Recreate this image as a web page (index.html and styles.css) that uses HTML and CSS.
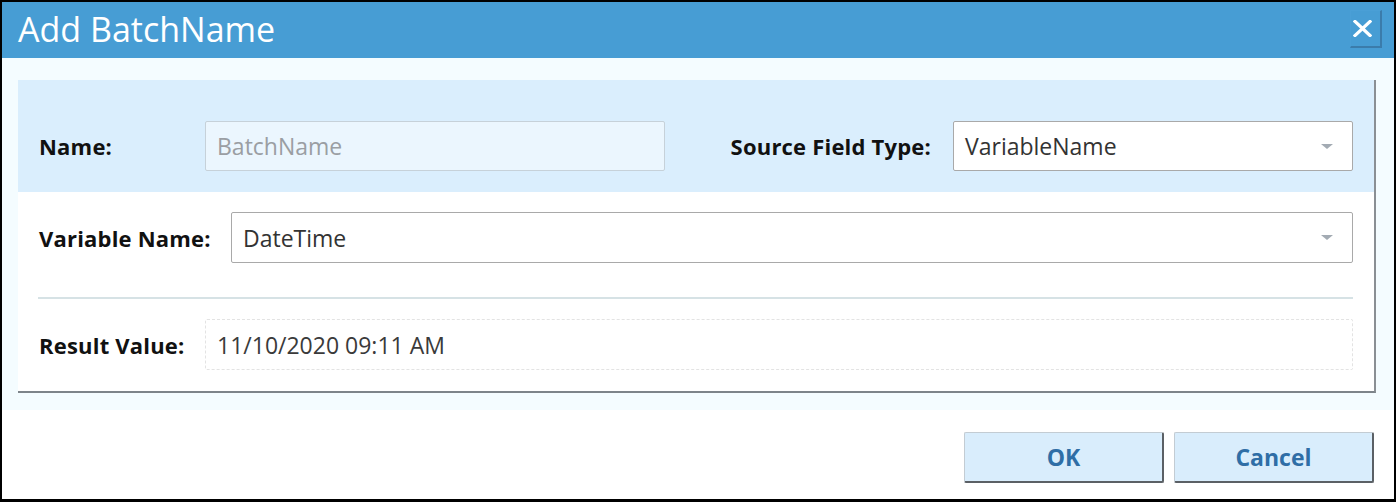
FILE: index.html
```html
<!DOCTYPE html>
<html>
<head>
<meta charset="utf-8">
<title>Add BatchName</title>
<link rel="stylesheet" href="styles.css">
</head>
<body>
<div class="window">
  <header class="titlebar">
    <h1 class="title">Add BatchName</h1>
    <button class="close" aria-label="Close">
      <svg width="19" height="17" viewBox="0 0 19 17"><path d="M2 1.5 L17 15.5 M17 1.5 L2 15.5" stroke="#ffffff" stroke-width="3.2" stroke-linecap="square"/></svg>
    </button>
  </header>
  <main class="content">
    <section class="panel">
      <div class="panel-top">
        <div class="row">
          <span class="label label-name">Name:</span>
          <div class="field field-readonly">BatchName</div>
          <span class="label label-source">Source Field Type:</span>
          <div class="field select select-source"><span>VariableName</span><span class="arrow"></span></div>
        </div>
      </div>
      <div class="panel-bottom">
        <div class="row">
          <span class="label label-variable">Variable Name:</span>
          <div class="field select select-variable"><span>DateTime</span><span class="arrow"></span></div>
        </div>
        <div class="sep"></div>
        <div class="row">
          <span class="label label-result">Result Value:</span>
          <div class="field field-result">11/10/2020 09:11 AM</div>
        </div>
      </div>
    </section>
    <footer class="buttons">
      <button class="btn">OK</button>
      <button class="btn">Cancel</button>
    </footer>
  </main>
</div>
</body>
</html>
```
FILE: styles.css
```css
* { box-sizing: border-box; }
html, body { margin: 0; padding: 0; background: #ffffff; }
body { font-family: "Open Sans", "Noto Sans", "Liberation Sans", sans-serif; }

.window {
  width: 1396px;
  height: 502px;
  border: 2px solid #000000;
  border-bottom-width: 3px;
  background: #ffffff;
  display: flex;
  flex-direction: column;
}

.titlebar {
  height: 56px;
  background: #479dd4;
  display: flex;
  justify-content: space-between;
  align-items: flex-start;
  padding: 0 12px 0 16px;
  flex: none;
}
.title {
  margin: 0;
  font-weight: 400;
  font-size: 34px;
  line-height: 54px;
  color: #ffffff;
  letter-spacing: 0;
}
.close {
  margin-top: 8px;
  width: 32px;
  height: 38px;
  padding: 0 6px 0 0;
  background: #479dd4;
  border: 1px solid #4a9fd6;
  border-right: 2px solid #3b7cab;
  border-bottom: 2px solid #3b7cab;
  display: flex;
  align-items: center;
  justify-content: center;
}
.close svg { display: block; }

.content {
  flex: 1;
  background: linear-gradient(#f4fcff 0, #f4fcff 352px, #ffffff 352px);
  padding: 22px 18px 0 16px;
  display: flex;
  flex-direction: column;
}

.panel {
  background: #ffffff;
  border-right: 2px solid #8a8f94;
  border-bottom: 2px solid #7d848a;
}
.panel-top {
  background: #daeefd;
  height: 112px;
  padding: 41px 21px 0 21px;
}
.panel-bottom {
  padding: 20px 21px 21px 20px;
}

.row {
  display: flex;
  align-items: center;
}

.label {
  font-weight: 700;
  font-size: 22px;
  color: #111111;
  letter-spacing: 0.2px;
  flex: none;
}
.label-name { width: 166px; }
.label-source { margin-left: auto; margin-right: 22px; }
.label-variable { width: 193px; padding-left: 1px; }
.label-result { width: 167px; padding-left: 1px; }

.field {
  height: 50px;
  display: flex;
  align-items: center;
  padding: 0 11px;
  font-size: 23px;
  color: #333333;
  border-radius: 2px;
}
.field-readonly {
  width: 460px;
  background: #ebf6fe;
  border: 1px solid #c6d1d9;
  color: #9a9ea3;
}
.select {
  background: #ffffff;
  border: 1px solid #a9a9a9;
  justify-content: space-between;
  padding-right: 19px;
}
.select-source { width: 400px; }
.select-variable { flex: 1; height: 51px; }
.arrow {
  width: 0;
  height: 0;
  border-left: 6px solid transparent;
  border-right: 6px solid transparent;
  border-top: 5px solid #a3abb3;
}
.field-result {
  flex: 1;
  height: 51px;
  border: 1px dashed #e3e3e3;
  color: #3a3a3a;
}

.sep {
  height: 2px;
  background: #d6e2e5;
  margin: 34px 0 20px 0;
}

.buttons {
  display: flex;
  justify-content: flex-end;
  gap: 10px;
  padding: 39px 2px 0 0;
}
.btn {
  width: 200px;
  height: 51px;
  background: #d9edfc;
  border: 1px solid #c3ccd3;
  border-right: 2px solid #5b6065;
  border-bottom: 2px solid #5b6065;
  border-radius: 2px;
  font-family: "Open Sans", "Noto Sans", sans-serif;
  font-weight: 700;
  font-size: 23px;
  color: #2f6ea6;
  padding: 0;
}
```
